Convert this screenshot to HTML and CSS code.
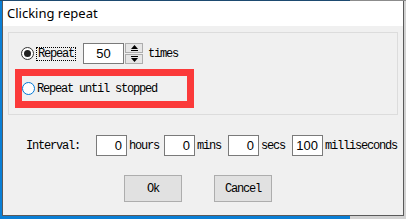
FILE: index.html
```html
<!DOCTYPE html>
<html>
<head>
<meta charset="utf-8">
<link rel="stylesheet" href="styles.css">
</head>
<body>
<div class="win">
  <div class="titlebar">Clicking repeat</div>
  <div class="client">
    <div class="group">
      <div class="row1">
        <span class="radio checked"></span>
        <span class="lbl focus">Repeat</span>
        <span class="spin">
          <span class="edit">50</span>
          <span class="spinbtns">
            <span class="sbtn"><svg width="7" height="6" viewBox="0 0 7 6"><polygon points="3.5,0 7,4 0,4" fill="#000"/><rect x="0" y="5" width="7" height="1" fill="#000"/></svg></span>
            <span class="sbtn"><svg width="7" height="6" viewBox="0 0 7 6"><rect x="0" y="0" width="7" height="1" fill="#000"/><polygon points="0,2 7,2 3.5,6" fill="#000"/></svg></span>
          </span>
        </span>
        <span class="lbl times">times</span>
      </div>
      <div class="hl">
        <span class="radio hover"></span>
        <span class="lbl">Repeat until stopped</span>
      </div>
    </div>
    <div class="interval">
      <span class="lbl ilabel">Interval:</span>
      <span class="num">0</span><span class="lbl unit u-hours">hours</span>
      <span class="num">0</span><span class="lbl unit u-mins">mins</span>
      <span class="num">0</span><span class="lbl unit u-secs">secs</span>
      <span class="num">100</span><span class="lbl unit">milliseconds</span>
    </div>
    <div class="buttons">
      <span class="btn lbl">Ok</span>
      <span class="btn lbl">Cancel</span>
    </div>
  </div>
</div>
</body>
</html>
```
FILE: styles.css
```css
html, body {
  margin: 0;
  padding: 0;
}
body {
  width: 406px;
  height: 219px;
  overflow: hidden;
  background:
    linear-gradient(to right, #1d4a70 350px, #8c8c8c 350px) top left / 100% 1px no-repeat,
    linear-gradient(to right, #0a7fd6 350px, #d2d2d2 350px);
}
.win {
  margin: 1px 0 0 2px;
  width: 400px;
  height: 214px;
  border: 1px solid #5a5a5a;
  border-top: none;
  background: #f0f0f0;
  display: flex;
  flex-direction: column;
}
.titlebar {
  height: 25px;
  background: #fff;
  font-family: "Noto Sans", sans-serif;
  font-size: 13px;
  line-height: 25px;
  padding-left: 4px;
  color: #000;
}
.client {
  display: flex;
  flex-direction: column;
}
.group {
  margin: 6px 5px 0 5px;
  height: 81px;
  border: 1px solid #dcdcdc;
  padding: 10px 0 0 6px;
  box-sizing: content-box;
}
.group {
  height: 66px;
  padding-bottom: 5px;
}
.lbl {
  font-family: "Liberation Mono", monospace;
  font-size: 12px;
  letter-spacing: -1.2px;
  color: #000;
  white-space: nowrap;
}
.row1 {
  display: flex;
  align-items: center;
  height: 21px;
  padding-left: 6px;
}
.radio {
  width: 11px;
  height: 11px;
  border: 1px solid #333;
  border-radius: 50%;
  background: #fff;
  display: inline-flex;
  align-items: center;
  justify-content: center;
  flex: none;
}
.radio.checked::after {
  content: "";
  width: 7px;
  height: 7px;
  border-radius: 50%;
  background: #222;
}
.radio.hover {
  border-color: #0078d7;
}
.focus {
  margin-left: 2px;
  height: 12px;
  line-height: 12px;
  border: 1px dotted #000;
  padding: 0 1px 0 1px;
}
.spin {
  display: flex;
  margin-left: 7px;
  height: 21px;
}
.edit {
  width: 39px;
  height: 19px;
  border: 1px solid #7a7a7a;
  background: #fff;
  font-family: "Liberation Sans", sans-serif;
  font-size: 13px;
  line-height: 19px;
  text-align: center;
}
.spinbtns {
  display: flex;
  flex-direction: column;
  justify-content: space-between;
  margin-left: 1px;
  width: 18px;
}
.sbtn {
  height: 8px;
  border: 1px solid #adadad;
  background: #e6e6e6;
  display: flex;
  align-items: center;
  justify-content: center;
}
.times {
  margin-left: 5px;
}
.hl {
  margin-top: 5px;
  width: 165px;
  height: 25px;
  border: 7px solid #fb3a3a;
  display: flex;
  align-items: center;
}
.hl .lbl {
  margin-left: 2px;
}
.interval {
  margin-top: 20px;
  padding-left: 23px;
  display: flex;
  align-items: center;
  height: 21px;
}
.ilabel {
  width: 70px;
}
.num {
  width: 25px;
  height: 19px;
  border: 1px solid #7a7a7a;
  background: #fff;
  font-family: "Liberation Sans", sans-serif;
  font-size: 13px;
  line-height: 19px;
  text-align: right;
  padding-right: 4px;
}
.unit {
  margin-left: 2px;
}
.u-hours { width: 35px; }
.u-mins { width: 31px; }
.u-secs { width: 31px; }
.buttons {
  margin-top: 19px;
  padding-left: 121px;
  display: flex;
  gap: 32px;
}
.btn {
  width: 56px;
  height: 25px;
  border: 1px solid #adadad;
  background: #e1e1e1;
  display: flex;
  align-items: center;
  justify-content: center;
}
```
